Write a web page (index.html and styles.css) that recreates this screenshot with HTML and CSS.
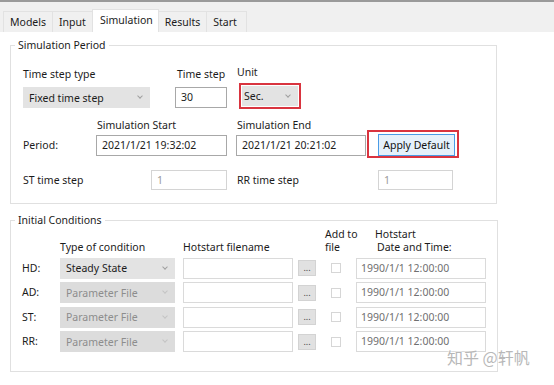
FILE: index.html
```html
<!DOCTYPE html>
<html lang="en">
  <head>
    <meta charset="UTF-8" />
    <meta name="viewport" content="width=device-width, initial-scale=1.0" />
    <link rel="stylesheet" href="styles.css">
    <title>Simulation</title>
  </head>
  <body>
    <div class="topbar"></div>
    <div class="tabs">
      <span class="tab">Models</span>
      <span class="tab">Input</span>
      <span class="tab active">Simulation</span>
      <span class="tab">Results</span>
      <span class="tab">Start</span>
    </div>

    <div class="page">
      <!-- simulation period -->
      <fieldset class="group period">
        <legend>Simulation Period</legend>

        <div class="row row-step">
          <div class="field f-type">
            <label>Time step type</label>
            <div class="combo">Fixed time step<span class="chev"></span></div>
          </div>
          <div class="field f-step">
            <label>Time step</label>
            <div class="input">30</div>
          </div>
          <div class="field f-unit">
            <label>Unit</label>
            <div class="mark mark-unit">
              <div class="combo">Sec.<span class="chev"></span></div>
            </div>
          </div>
        </div>

        <div class="row row-period">
          <span class="lbl period-lbl">Period:</span>
          <div class="field f-start">
            <label>Simulation Start</label>
            <div class="input">2021/1/21 19:32:02</div>
          </div>
          <div class="field f-end">
            <label>Simulation End</label>
            <div class="input">2021/1/21 20:21:02</div>
          </div>
          <div class="mark mark-apply">
            <button type="button" class="btn-apply">Apply Default</button>
          </div>
        </div>

        <div class="row row-ts">
          <span class="lbl st-lbl">ST time step</span>
          <div class="input disabled st-in">1</div>
          <span class="lbl rr-lbl">RR time step</span>
          <div class="input disabled rr-in">1</div>
        </div>
      </fieldset>

      <!-- initial conditions -->
      <fieldset class="group init">
        <legend>Initial Conditions</legend>

        <div class="cond-grid">
          <span class="head h-type">Type of condition</span>
          <span class="head h-file">Hotstart filename</span>
          <span class="head h-add">Add to<br />file</span>
          <span class="head h-date">Hotstart<span class="sub">Date and Time:</span></span>

          <span class="lbl">HD:</span>
          <div class="combo">Steady State<span class="chev"></span></div>
          <div class="input light"></div>
          <span class="dots">...</span>
          <span class="check"></span>
          <div class="input light date">1990/1/1 12:00:00</div>

          <span class="lbl">AD:</span>
          <div class="combo off">Parameter File<span class="chev"></span></div>
          <div class="input light"></div>
          <span class="dots">...</span>
          <span class="check"></span>
          <div class="input light date">1990/1/1 12:00:00</div>

          <span class="lbl">ST:</span>
          <div class="combo off">Parameter File<span class="chev"></span></div>
          <div class="input light"></div>
          <span class="dots">...</span>
          <span class="check"></span>
          <div class="input light date">1990/1/1 12:00:00</div>

          <span class="lbl">RR:</span>
          <div class="combo off">Parameter File<span class="chev"></span></div>
          <div class="input light"></div>
          <span class="dots">...</span>
          <span class="check"></span>
          <div class="input light date">1990/1/1 12:00:00</div>
        </div>
      </fieldset>
    </div>

    <div class="watermark">知乎 @轩帆</div>
  </body>
</html>
```

FILE: styles.css
```css
:root {
  --line: #e0e0e0;
  --field-border: #a8a8a8;
  --light-border: #dadada;
  --combo-bg: #e3e3e3;
  --combo-off: #dcdcdc;
  --mark-red: #d9343f;
}

body {
  margin: 0;
  width: 554px;
  height: 385px;
  overflow: hidden;
  position: relative;
  background: #fff;
  color: #1b1b1b;
  font-family: "Noto Sans", "Open Sans", sans-serif;
  font-size: 10.5px;
  white-space: nowrap;
}

/* window strip + tabs */
.topbar {
  height: 2px;
  background: #9a9a9a;
}

.tabs {
  height: 30px;
  box-sizing: border-box;
  padding-left: 3px;
  display: flex;
  align-items: flex-end;
  background: #f0f0f0;
}

.tab {
  min-width: 41px;
  height: 21px;
  line-height: 21px;
  padding: 0 6px;
  border: 1px solid #e2e2e2;
  border-bottom: none;
  margin-right: -1px;
  box-sizing: border-box;
}

.tab.active {
  height: 23px;
  line-height: 20px;
  padding: 0 5px 0 7px;
  background: #fff;
  position: relative;
}

.page {
  padding: 5px 0 0 10px;
}

/* group boxes */
.group {
  margin: 0;
  width: 487px;
  box-sizing: border-box;
  border: 1px solid var(--line);
  padding: 0 12px 13px 12px;
}

.group legend {
  margin-left: -8px;
  padding: 0 3px;
  line-height: 16px;
}

.row {
  display: flex;
  align-items: flex-end;
}

.field {
  display: flex;
  flex-direction: column;
}

.field label {
  line-height: 16px;
  margin-bottom: 5px;
}

.lbl {
  line-height: 21px;
}

/* controls */
.input {
  height: 21px;
  box-sizing: border-box;
  border: 1px solid var(--field-border);
  padding: 0 5px;
  line-height: 19px;
  background: #fff;
}

.input.disabled {
  height: 20px;
  line-height: 18px;
  border-color: #d4d4d4;
  color: #9a9a9a;
}

.input.light {
  border-color: var(--light-border);
}

.combo {
  height: 21px;
  box-sizing: border-box;
  padding: 0 8px 0 6px;
  display: flex;
  align-items: center;
  justify-content: space-between;
  background: var(--combo-bg);
}

.combo.off {
  background: var(--combo-off);
  color: #8d8d8d;
}

.chev {
  width: 3px;
  height: 3px;
  margin-top: -3px;
  border-right: 1px solid #a0a0a0;
  border-bottom: 1px solid #a0a0a0;
  transform: rotate(45deg);
}

.combo.off .chev {
  border-color: #c4c4c4;
}

.mark {
  border: 2px solid var(--mark-red);
}

/* row 1 */
.row-step {
  margin-top: 11px;
}

.f-type {
  width: 127px;
}

.f-step {
  width: 52px;
  margin-left: 25px;
}

.f-step label {
  padding-left: 2px;
}

.f-unit {
  margin-left: 10px;
}

.f-unit label {
  margin-bottom: 3px;
}

.mark-unit {
  width: 62px;
  box-sizing: border-box;
  margin: 0 0 -1px 2px;
  padding: 1px;
}

.mark-unit .combo {
  height: 20px;
  padding-left: 2px;
}

/* row 2 */
.row-period {
  margin-top: 9px;
}

.period-lbl {
  width: 73px;
}

.f-start {
  width: 131px;
}

.f-end {
  width: 130px;
  margin-left: 9px;
}

.f-start label,
.f-end label {
  padding-left: 1px;
  margin-bottom: 2px;
}

.mark-apply {
  margin: 0 0 -2px 1px;
  padding: 2px 2px 0 9px;
}

.btn-apply {
  display: block;
  width: 77px;
  height: 22px;
  padding: 0;
  border: 1px solid #4a9be6;
  background: #e5f1fb;
  color: #111;
  font: inherit;
}

/* row 3 */
.row-ts {
  margin-top: 14px;
}

.st-lbl {
  width: 128px;
  line-height: 20px;
}

.st-in {
  width: 76px;
}

.rr-lbl {
  width: 141px;
  margin-left: 10px;
  line-height: 20px;
}

.rr-in {
  width: 75px;
}

/* initial conditions */
.init {
  margin-top: 8px;
  padding: 0 11px 19px 11px;
}

.init legend {
  margin-left: -7px;
}

.cond-grid {
  display: grid;
  grid-template-columns: 38px 123px 115px 33px 25px 130px;
  grid-template-rows: 26px;
  grid-auto-rows: 21px;
  row-gap: 3.6px;
  align-items: center;
}

.head {
  align-self: end;
  line-height: 13px;
}

.h-type {
  grid-column: 2;
}

.h-add {
  grid-column: 4 / span 2;
  padding-left: 27px;
}

.h-date {
  padding-left: 19px;
}

.h-date .sub {
  display: block;
  padding-left: 2px;
}

.cond-grid .combo {
  width: 115px;
}

.cond-grid .input.light {
  width: 110px;
}

.cond-grid .input.date {
  width: 130px;
  padding-left: 4px;
  color: #707070;
}

.dots {
  width: 18px;
  height: 16px;
  box-sizing: border-box;
  border: 1px solid #d3d3d3;
  background: #e1e1e1;
  color: #444;
  font-size: 9px;
  line-height: 14px;
  text-align: center;
}

.check {
  width: 10px;
  height: 10px;
  box-sizing: border-box;
  border: 1px solid #d6d6d6;
}

.watermark {
  position: absolute;
  left: 447px;
  top: 345px;
  font-family: "Noto Sans CJK SC", sans-serif;
  font-size: 16px;
  color: #b8b8b8;
  text-shadow: 0 0 2px #fff, 0 0 2px #fff;
}
```
